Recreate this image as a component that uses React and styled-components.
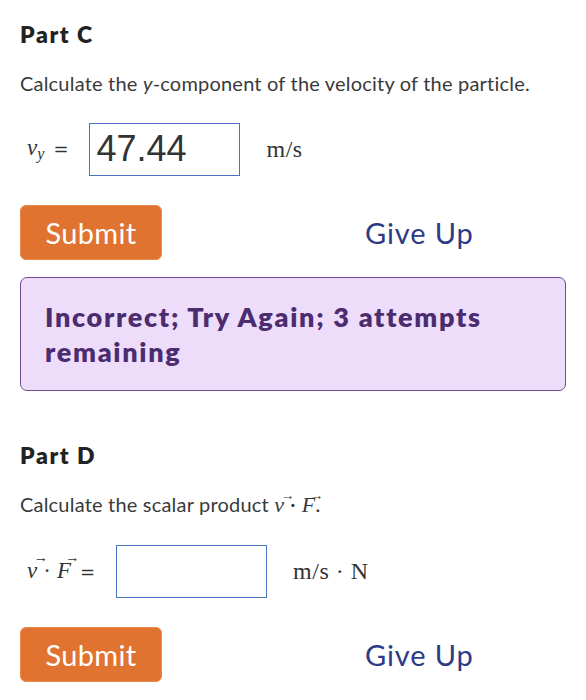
import React from 'react';
import styled, { createGlobalStyle } from 'styled-components';

const GlobalStyle = createGlobalStyle`
  html, body { margin: 0; padding: 0; background: #fff; }
  body { font-family: Lato, "Open Sans", sans-serif; color: #333; }
`;

const Page = styled.div`width: 546px; padding: 0 20px 40px 20px;`;
const Section = styled.section`display: flex; flex-direction: column; margin-top: ${({ $top }) => $top}px;`;
const PartTitle = styled.h2`margin: 0; font-size: 23px; line-height: 26px; font-weight: 800; color: #222; letter-spacing: 1.6px;`;
const Prompt = styled.p`margin: 24px 0 0 0; font-size: 20px; line-height: 24px; color: #3a3a3a; letter-spacing: 0.2px;`;
const Var = styled.span`font-family: "Liberation Serif", "DejaVu Serif", serif; font-style: italic;`;
const MathInline = styled.span`font-size: 22px; letter-spacing: 0;`;

// MathJax-style vector: letter with a small arrow hanging above its right side
const Vec = styled.span`
  position: relative; font-family: "Liberation Serif", serif; font-style: italic;
  &::after {
    content: '→'; position: absolute; font-style: normal; font-size: 0.62em;
    top: ${({ $up }) => $up || -0.6}em; right: ${({ $shift }) => $shift || -0.75}em;
  }
`;
const Dot = styled.span`margin: 0 6px;`;

const AnswerRow = styled.div`display: flex; align-items: center; height: 52px; margin-top: 28px;`;
const MathLabel = styled.div`padding-left: 7px; font-family: "Liberation Serif", serif; font-size: 23px; color: #333; white-space: nowrap;`;
const Sub = styled.sub`font-size: 0.7em; vertical-align: -0.25em;`;
const Eq = styled.span`font-family: "DejaVu Sans", sans-serif; font-size: 18px; margin-left: 9px;`;
const AnswerBox = styled.input`
  box-sizing: border-box; width: 151px; height: 53px; margin-left: 21px;
  border: 1.5px solid #4d72c2; border-radius: 0; padding: 0 0 0 6px;
  font-family: "Liberation Sans", Arial, sans-serif; font-size: 36px; color: #333; background: #fff;
  outline: none;
`;
const Unit = styled.span`margin-left: 26px; font-family: "Liberation Serif", serif; font-size: 24px; color: #333; letter-spacing: 0.5px; word-spacing: 0px;`;

const Actions = styled.div`display: flex; align-items: center; margin-top: 30px;`;
const SubmitButton = styled.button`
  width: 142px; height: 55px; border: 1px solid #e98a4a; border-radius: 6px;
  background: #e0732f; color: #fff; font-family: Lato, sans-serif; font-size: 29px; letter-spacing: 0.3px;
  padding: 0; cursor: pointer;
`;
const GiveUp = styled.a`margin-left: 203px; font-size: 29px; letter-spacing: 0.9px; color: #2e3a86; text-decoration: none;`;

const Feedback = styled.div`
  box-sizing: border-box; height: 114px; margin-top: 17px; padding: 21px 50px 22px 24px;
  border: 1.5px solid #6e4c91; border-radius: 7px; background: #eedcfb;
  color: #4b2d6f; font-size: 27px; font-weight: 800; line-height: 35px; letter-spacing: 1.7px;
`;

const Problem = ({ title, prompt, label, value, unit, top, children }) => (
  <Section $top={top}>
    <PartTitle>{title}</PartTitle>
    <Prompt>{prompt}</Prompt>
    <AnswerRow>
      <MathLabel>{label}</MathLabel>
      <AnswerBox defaultValue={value} />
      <Unit>{unit}</Unit>
    </AnswerRow>
    <Actions>
      <SubmitButton>Submit</SubmitButton>
      <GiveUp href="#">Give Up</GiveUp>
    </Actions>
    {children}
  </Section>
);

const DotProduct = () => (
  <>
    <Vec>v</Vec><Dot>·</Dot><Vec $shift={-0.6}>F</Vec>
  </>
);

const App = () => (
  <Page>
    <GlobalStyle />
    <Problem
      top={21}
      title="Part C"
      prompt={<>Calculate the <i>y</i>-component of the velocity of the particle.</>}
      label={<><Var>v</Var><Sub><Var>y</Var></Sub><Eq>=</Eq></>}
      value="47.44"
      unit="m/s"
    >
      <Feedback>Incorrect; Try Again; 3 attempts remaining</Feedback>
    </Problem>
    <Problem
      top={51}
      title="Part D"
      prompt={<>Calculate the scalar product <MathInline><DotProduct />.</MathInline></>}
      label={<><DotProduct /><Eq>=</Eq></>}
      value=""
      unit="m/s · N"
    />
  </Page>
);

export default App;
